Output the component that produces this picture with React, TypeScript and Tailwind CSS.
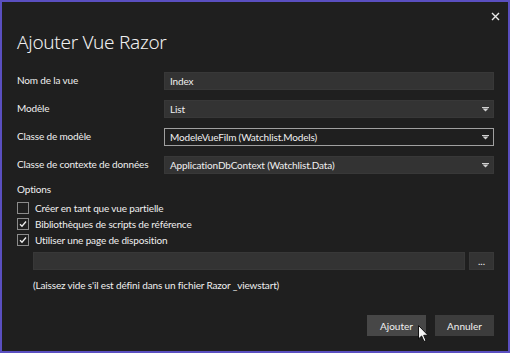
import React from "react";

const body = { fontFamily: 'Lato, "Noto Sans", sans-serif' };
const title = { fontFamily: '"Noto Sans", "Open Sans", sans-serif' };

function Caret() {
  return (
    <svg width="7" height="5" viewBox="0 0 7 5" className="shrink-0">
      <rect x="0" y="0" width="7" height="1" fill="#d0d0d0" />
      <path d="M0.5 1.5 H6.5 L3.5 4.5 Z" fill="#d0d0d0" />
    </svg>
  );
}

function Check({ checked, label }: { checked: boolean; label: string }) {
  return (
    <div className="flex h-4 items-center gap-[6px]">
      <div className="flex h-[12px] w-[12px] items-center justify-center border border-[#8c8c8c] bg-[#1f1f1f]">
        {checked && (
          <svg width="8" height="8" viewBox="0 0 8 8">
            <path d="M1 4.2 L3 6.2 L7 1.5" stroke="#f0f0f0" strokeWidth="1.3" fill="none" />
          </svg>
        )}
      </div>
      <span className="text-[10px] leading-none tracking-[-0.15px] text-[#f0f0f0]">{label}</span>
    </div>
  );
}

const rows = [
  { label: "Nom de la vue", value: "Index", caret: false, focus: false },
  { label: "Modèle", value: "List", caret: true, focus: false },
  { label: "Classe de modèle", value: "ModeleVueFilm (Watchlist.Models)", caret: true, focus: true },
  { label: "Classe de contexte de données", value: "ApplicationDbContext (Watchlist.Data)", caret: true, focus: false },
];

export default function App() {
  return (
    <div className="h-[354px] w-[512px] bg-white" style={body}>
      <div className="relative flex h-[353px] w-[510px] flex-col border-2 border-[#5a4fc0] bg-[#1f1f1f] pl-[15px] pr-[14px] text-[#f0f0f0]">
        {/* close button */}
        <div className="-mr-[6px] flex h-[30px] justify-end pt-[10px]">
          <svg width="9" height="9" viewBox="0 0 9 9">
            <path d="M1 1 L8 8 M8 1 L1 8" stroke="#e8e8e8" strokeWidth="1.4" />
          </svg>
        </div>

        <h1 className="mt-[1px] text-[19px] font-light leading-none tracking-[-0.3px]" style={title}>
          Ajouter Vue Razor
        </h1>

        <div className="mt-[20px] grid grid-cols-[147px_1fr] items-center gap-y-[10px]">
          {rows.map((r) => (
            <React.Fragment key={r.label}>
              <span className="-mt-[3px] whitespace-nowrap text-[10px] leading-none tracking-[-0.15px]">{r.label}</span>
              <div
                className={`flex h-[18px] items-center justify-between pl-[5px] pr-[4px] text-[10px] tracking-[-0.15px] ${
                  r.focus ? "border border-[#a0a0a0] bg-[#1f1f1f] pl-[4px]" : "border border-[#383838] bg-[#333333]"
                }`}
              >
                <span className="leading-none">{r.value}</span>
                {r.caret && <Caret />}
              </div>
            </React.Fragment>
          ))}
        </div>

        <div className="mt-[10px] text-[10px] leading-none tracking-[-0.15px]">Options</div>

        <div className="mt-[6px] flex flex-col">
          <Check checked={false} label="Créer en tant que vue partielle" />
          <Check checked={true} label="Bibliothèques de scripts de référence" />
          <Check checked={true} label="Utiliser une page de disposition" />
        </div>

        <div className="mt-[4px] flex gap-[4px] pl-[16px]">
          <div className="h-[18px] flex-1 border border-[#383838] bg-[#333333]" />
          <div className="flex h-[18px] w-[25px] items-center justify-center border border-[#383838] bg-[#333333] text-[10px] leading-none">
            ...
          </div>
        </div>

        <div className="mt-[10px] pl-[16px] text-[10px] leading-none tracking-[-0.15px]">
          (Laissez vide s'il est défini dans un fichier Razor _viewstart)
        </div>

        <div className="mt-auto mb-[15px] flex justify-end gap-[9px]">
          <button className="h-[21px] w-[59px] bg-[#474747] text-[10px] leading-none text-[#f0f0f0]">
            Ajouter
          </button>
          <button className="h-[21px] w-[59px] bg-[#3c3c3c] text-[10px] leading-none text-[#f0f0f0]">
            Annuler
          </button>
        </div>

        {/* mouse pointer */}
        <svg className="absolute left-[416px] top-[323px]" width="11" height="18" viewBox="0 0 11 18">
          <path d="M0.5 0.5 L0.5 14 L3.6 11 L6 16.5 L8 15.6 L5.7 10.3 L10 10.3 Z" fill="#f4f4f4" stroke="#111" strokeWidth="1" />
        </svg>
      </div>
    </div>
  );
}
